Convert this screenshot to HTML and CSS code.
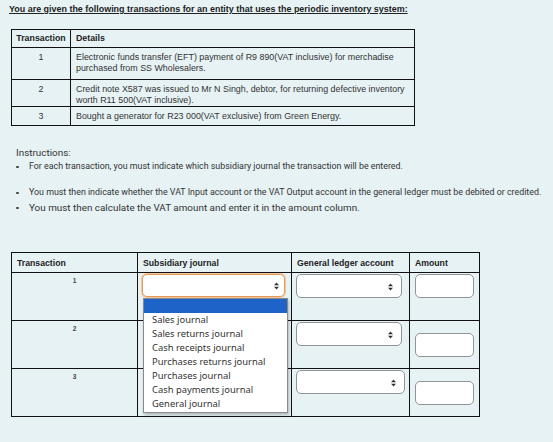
FILE: index.html
```html
<!DOCTYPE html>
<html>
<head>
<meta charset="utf-8">
<link rel="stylesheet" href="styles.css">
</head>
<body>
<div class="page">
  <p class="title">You are given the following transactions for an entity that uses the periodic inventory system:</p>
  <table class="tx">
    <tr class="h"><th class="c1">Transaction</th><th class="c2">Details</th></tr>
    <tr class="r1"><td class="c1">1</td><td class="c2">Electronic funds transfer (EFT) payment of R9 890(VAT inclusive) for merchadise purchased from SS Wholesalers.</td></tr>
    <tr class="r2"><td class="c1">2</td><td class="c2">Credit note X587 was issued to Mr N Singh, debtor, for returning defective inventory worth R11 500(VAT inclusive).</td></tr>
    <tr class="r3"><td class="c1">3</td><td class="c2">Bought a generator for R23 000(VAT exclusive) from Green Energy.</td></tr>
  </table>

  <div class="instr">
    <p class="ih">Instructions:</p>
    <ul>
      <li class="b1">For each transaction, you must indicate which subsidiary journal the transaction will be entered.</li>
      <li class="b2">You must then indicate whether the VAT Input account or the VAT Output account in the general ledger must be debited or credited.</li>
      <li class="b3">You must then calculate the VAT amount and enter it in the amount column.</li>
    </ul>
  </div>

  <table class="ans">
    <tr class="h">
      <th class="a1">Transaction</th>
      <th class="a2">Subsidiary journal</th>
      <th class="a3">General ledger account</th>
      <th class="a4">Amount</th>
    </tr>
    <tr>
      <td class="a1"><div class="num">1</div></td>
      <td class="a2">
        <div class="cellwrap">
          <div class="sel focus"><span class="arr"><svg width="5" height="8" viewBox="0 0 5 8"><path d="M0 3.3L2.5 0.5L5 3.3Z M0 4.7L2.5 7.5L5 4.7Z" fill="#333"/></svg></span></div>
          <div class="list">
            <div class="opt hl"></div>
            <div class="opt">Sales journal</div>
            <div class="opt">Sales returns journal</div>
            <div class="opt">Cash receipts journal</div>
            <div class="opt">Purchases returns journal</div>
            <div class="opt">Purchases journal</div>
            <div class="opt">Cash payments journal</div>
            <div class="opt">General journal</div>
          </div>
        </div>
      </td>
      <td class="a3"><div class="sel gl"><span class="arr"><svg width="5" height="8" viewBox="0 0 5 8"><path d="M0 3.3L2.5 0.5L5 3.3Z M0 4.7L2.5 7.5L5 4.7Z" fill="#333"/></svg></span></div></td>
      <td class="a4"><div class="inp"></div></td>
    </tr>
    <tr>
      <td class="a1"><div class="num">2</div></td>
      <td class="a2"></td>
      <td class="a3"><div class="sel gl"><span class="arr"><svg width="5" height="8" viewBox="0 0 5 8"><path d="M0 3.3L2.5 0.5L5 3.3Z M0 4.7L2.5 7.5L5 4.7Z" fill="#333"/></svg></span></div></td>
      <td class="a4 mid"><div class="inp"></div></td>
    </tr>
    <tr>
      <td class="a1"><div class="num">3</div></td>
      <td class="a2"></td>
      <td class="a3"><div class="sel gl wide"><span class="arr"><svg width="5" height="8" viewBox="0 0 5 8"><path d="M0 3.3L2.5 0.5L5 3.3Z M0 4.7L2.5 7.5L5 4.7Z" fill="#333"/></svg></span></div></td>
      <td class="a4 mid"><div class="inp"></div></td>
    </tr>
  </table>
</div>
</body>
</html>
```

FILE: styles.css
```css
html, body {
  margin: 0;
  padding: 0;
  background: #e7f2f5;
}
.page {
  width: 553px;
  height: 442px;
  padding: 4px 0 0 9px;
  box-sizing: border-box;
  font-family: "Liberation Sans", Arial, sans-serif;
  color: #333;
}
.title {
  margin: 0;
  font-size: 8.95px;
  font-weight: bold;
  text-decoration: underline;
  color: #222;
  line-height: 11px;
}
.tx {
  border-collapse: collapse;
  margin: 14px 0 0 2px;
  width: 404px;
  font-size: 8.9px;
  line-height: 11px;
}
.tx th, .tx td {
  border: 1px solid #111;
  padding: 0 5px;
  vertical-align: top;
  text-align: left;
}
.tx th { font-weight: bold; color: #222; height: 17px; vertical-align: middle; font-size: 8.8px; }
.tx .c1 { width: 50px; text-align: center; padding: 0 4px; }
.tx td.c1 { padding-top: 4px; }
.tx td.c2 { padding-top: 4px; padding-right: 1px; }
.tx .r1 td { height: 27px; }
.tx .r2 td { height: 22px; }
.tx .r3 td { height: 14px; }
.tx td.c1, .tx td.c2 { box-sizing: content-box; }

.instr {
  margin: 21px 0 0 0;
  font-family: Roboto, "Liberation Sans", sans-serif;
  font-size: 9px;
  color: #333;
}
.ih { margin: 0 0 0 7px; line-height: 11px; font-size: 9.9px; }
.instr ul {
  margin: 3px 0 0 0;
  padding: 0 0 0 20px;
  list-style: none;
}
.instr li {
  position: relative;
  line-height: 11px;
}
.instr li::before {
  content: "";
  position: absolute;
  left: -13px;
  top: 4.5px;
  width: 2.5px;
  height: 2.5px;
  border-radius: 50%;
  background: #444;
}
.instr .b1 { font-size: 8.85px; }
.instr .b2 { margin-top: 15px; font-size: 8.85px; }
.instr .b3 { margin-top: 4px; font-size: 9.9px; }

.ans {
  border-collapse: collapse;
  margin: 39px 0 0 2px;
  font-size: 8.7px;
}
.ans th, .ans td {
  border: 1px solid #111;
  padding: 0;
  text-align: left;
  vertical-align: top;
}
.ans th {
  height: 19px;
  font-weight: bold;
  color: #222;
  padding-left: 5px;
  vertical-align: middle;
  font-size: 8.7px;
}
.ans tr + tr { height: 48px; }
.ans td { height: 47px; }
.ans .a1 { width: 120px; }
.ans .a2 { width: 148px; }
.ans .a3 { width: 112px; }
.ans .a4 { width: 64px; }
.ans td.a1 { width: 125px; }
.ans td.a2 { width: 153px; }
.ans td.a3 { width: 117px; }
.ans td.a4 { width: 69px; }
.num {
  text-align: center;
  font-size: 6.5px;
  line-height: 8px;
  font-weight: bold;
  color: #444;
  padding-top: 4px;
}
.ans td.mid { vertical-align: middle; }
.cellwrap { position: relative; }
.sel {
  position: relative;
  height: 24px;
  background: #fff;
  border: 1px solid #8f9498;
  border-radius: 5px;
  box-sizing: border-box;
}
.ans td.a2 .sel { margin: 0 0 0 4px; width: 143px; }
.sel.focus {
  height: 23px;
  border: 1px solid #e89a5a;
  box-shadow: 0 0 0 1px #f3c69a;
  margin-top: 1px !important;
}
.sel.gl { margin: 0 0 0 4px; width: 106px; margin-top: 1px; }
.sel.gl.wide { width: 109px; }
.arr {
  position: absolute;
  right: 8px;
  top: 7.5px;
  line-height: 0;
}
.ans td.a2 .arr { right: 5px; top: 7px; }
.inp {
  margin: 1px 0 0 5px;
  width: 59px;
  height: 24px;
  background: #fff;
  border: 1px solid #8f9498;
  border-radius: 5px;
  box-sizing: border-box;
}
.list {
  position: absolute;
  left: 5px;
  top: 24px;
  width: 143px;
  background: #fff;
  border: 1px solid #8a8a8a;
  box-shadow: 1px 2px 3px rgba(0,0,0,0.25);
  font-family: "Noto Sans", Roboto, sans-serif;
  font-size: 9.4px;
  color: #333;
  z-index: 5;
  padding-bottom: 1px;
}
.opt {
  height: 14px;
  line-height: 14px;
  padding-left: 8px;
  white-space: nowrap;
}
.opt.hl { background: #1d63c8; height: 14px; }
```
